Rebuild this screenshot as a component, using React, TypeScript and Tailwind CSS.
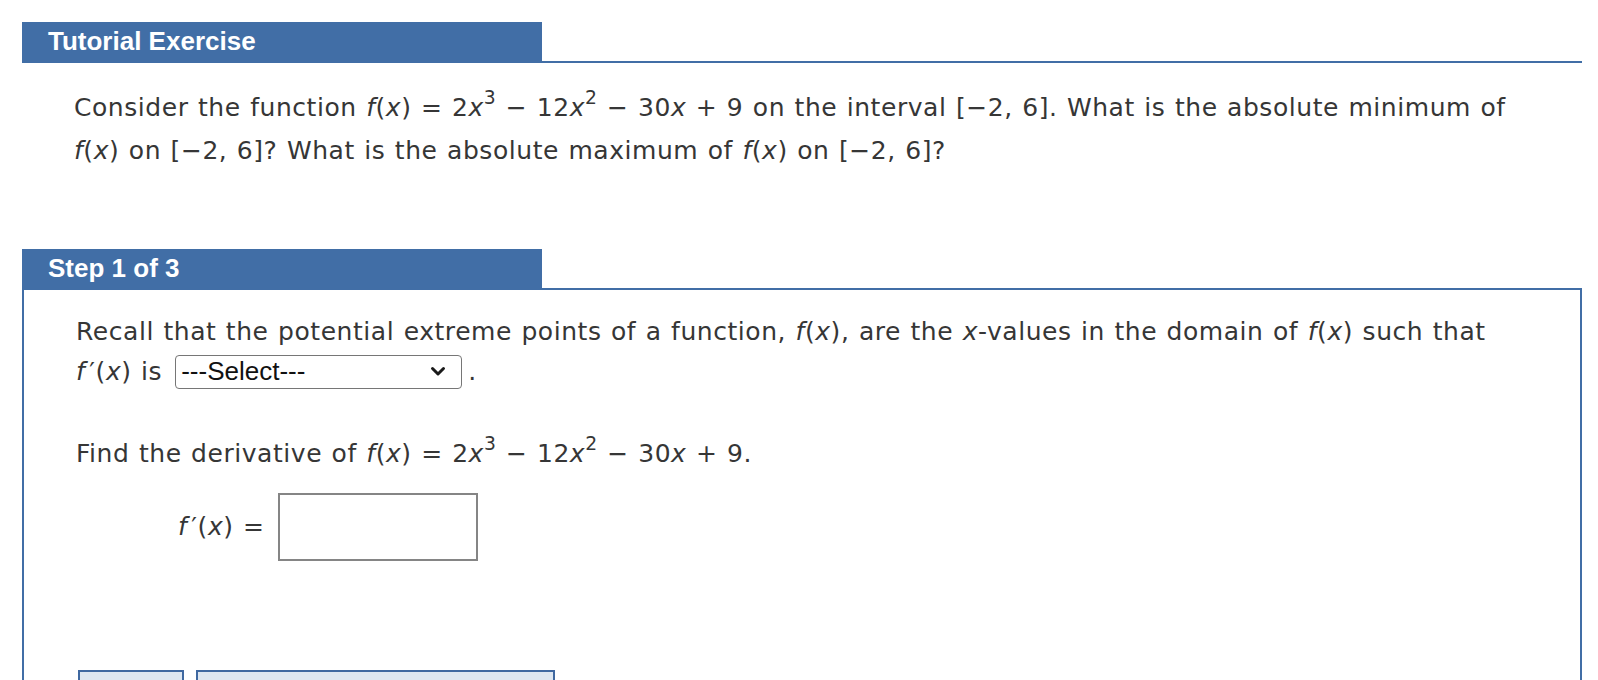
import type { ReactNode } from 'react'

const BLUE = 'border-[#416ea6]'

function SectionBar({ title }: { title: string }) {
  return (
    <div className={`flex h-[41px] border-b-2 ${BLUE}`}>
      <div className="w-[520px] bg-[#416ea6] pl-[26px] font-['Liberation_Sans',Arial,sans-serif] text-[26px] font-bold leading-[39px] tracking-normal text-white [word-spacing:0px]">
        {title}
      </div>
    </div>
  )
}

const I = ({ children }: { children: ReactNode }) => <i className="italic">{children}</i>

// f(x)
const Fx = () => (
  <>
    <I>f</I>(<I>x</I>)
  </>
)

// f'(x)
const Fpx = () => (
  <>
    <I>f</I>
    <span className="ml-[4px]">′</span>(<I>x</I>)
  </>
)

const Poly = () => (
  <>
    2<I>x</I>
    <sup className="-top-[0.62em]">3</sup> − 12<I>x</I>
    <sup className="-top-[0.62em]">2</sup> − 30<I>x</I> + 9
  </>
)

function Chevron() {
  return (
    <svg width="16" height="11" viewBox="0 0 16 11" fill="none">
      <path d="M2.5 2.5 L8 8 L13.5 2.5" stroke="#1a1a1a" strokeWidth="3" strokeLinecap="round" strokeLinejoin="round" />
    </svg>
  )
}

export default function App() {
  return (
    <div className="min-h-screen bg-white pl-[22px] pt-[22px] font-['DejaVu_Sans',Verdana,sans-serif] text-[#363636]">
      <div className="w-[1560px]">
        <SectionBar title="Tutorial Exercise" />

        <p className="pl-[52px] pt-[23px] text-[25px] leading-[43px] tracking-[0.55px] [word-spacing:1px]">
          <span className="block whitespace-nowrap">
            Consider the function <Fx /> = <Poly /> on the interval [−2, 6]. What is the absolute minimum of
          </span>
          <span className="block whitespace-nowrap">
            <Fx /> on [−2, 6]? What is the absolute maximum of <Fx /> on [−2, 6]?
          </span>
        </p>

        <div className="mt-[77px]">
          <SectionBar title="Step 1 of 3" />
        </div>

        <div
          className={`border-x-2 border-b-2 ${BLUE} pb-[40px] pl-[52px] pt-[21px] text-[25px] tracking-[0.55px] [word-spacing:1px]`}
        >
          <div className="leading-[41px]">
            <p className="whitespace-nowrap">
              Recall that the potential extreme points of a function, <Fx />, are the <I>x</I>-values in the domain of{' '}
              <Fx /> such that
            </p>
            <div className="flex h-[39px] items-center whitespace-nowrap">
              <span>
                <Fpx /> is
              </span>
              <div className="ml-[13px] flex h-[34px] w-[287px] items-center justify-between rounded-[4px] border border-[#767676] bg-white pl-[5px] pr-[15px] font-['Liberation_Sans',Arial,sans-serif] text-[26px] tracking-normal text-[#111] [word-spacing:0px]">
                <span>---Select---</span>
                <Chevron />
              </div>
              <span className="ml-[6px]">.</span>
            </div>
          </div>

          <p className="mt-[42px] whitespace-nowrap leading-[42px]">
            Find the derivative of <Fx /> = <Poly />.
          </p>

          <div className="ml-[102px] mt-[18px] flex items-center gap-[13px]">
            <span className="whitespace-nowrap">
              <Fpx /> =
            </span>
            <div className="h-[68px] w-[200px] border-2 border-[#858585] bg-white" />
          </div>

          <div className="ml-[2px] mt-[109px] flex gap-[12px] text-[22px] leading-[26px] tracking-normal text-[#222] [word-spacing:0px]">
            <button className="h-[40px] w-[106px] border-2 border-[#3f68a0] bg-[#dde6f0] pt-[2px] text-center">
              Submit
            </button>
            <button className="h-[40px] w-[359px] border-2 border-[#3f68a0] bg-[#dde6f0] pt-[2px] text-center">
              Skip (you cannot come back)
            </button>
          </div>
        </div>
      </div>
    </div>
  )
}
